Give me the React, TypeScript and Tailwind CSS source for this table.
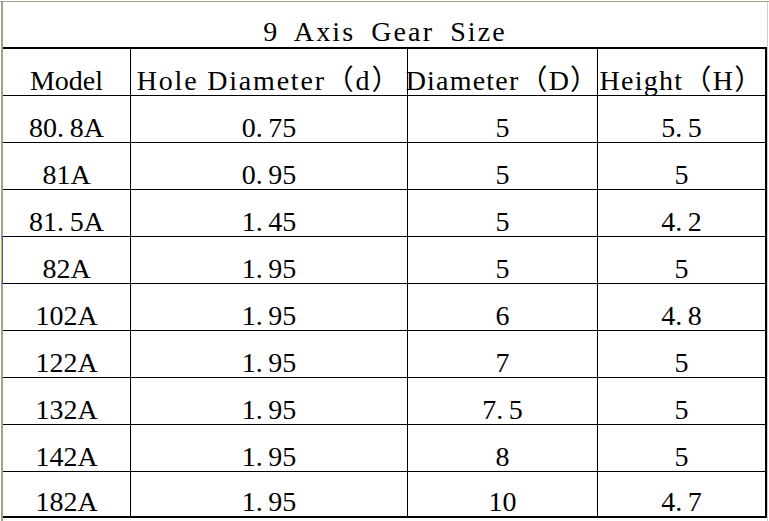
import { Fragment } from "react";

const rows: string[][] = [
  ["80.8A", "0.75", "5", "5.5"],
  ["81A", "0.95", "5", "5"],
  ["81.5A", "1.45", "5", "4.2"],
  ["82A", "1.95", "5", "5"],
  ["102A", "1.95", "6", "4.8"],
  ["122A", "1.95", "7", "5"],
  ["132A", "1.95", "7.5", "5"],
  ["142A", "1.95", "8", "5"],
  ["182A", "1.95", "10", "4.7"],
];

// periods get a half-em cell, like the sheet's monospaced font
const Num = ({ value }: { value: string }) => {
  const parts = value.split(".");
  return (
    <span>
      {parts.map((p, i) => (
        <Fragment key={i}>
          {i > 0 && <span className="inline-block w-[0.45em]">.</span>}
          {p}
        </Fragment>
      ))}
    </span>
  );
};

const cell =
  "flex items-end justify-center whitespace-nowrap border-b border-black";

const App = () => {
  return (
    <div className="w-[769px] h-[521px] bg-white overflow-hidden flex flex-col text-black [font-family:'Liberation_Serif','Noto_Sans_CJK_SC',serif] text-[28px] leading-none">
      <div className="h-px mt-px bg-[#a3a08c] shrink-0" />
      <div className="flex flex-1">
        {/* sheet gutter */}
        <div className="ml-px w-[2px] flex flex-col">
          <div className="h-[234px] bg-[#a3a08c]" />
          <div className="h-[48px] flex border-y border-[#3b5bc4]">
            <div className="w-px bg-[#f2a33a]" />
            <div className="w-px bg-[#3b5bc4]" />
          </div>
          <div className="flex-1 bg-[#a3a08c]" />
        </div>

        <div className="w-[764px] flex flex-col">
          <div className="h-[45px] flex items-end justify-center tracking-[2.1px] [word-spacing:7px] pb-px">
            9 Axis Gear Size
          </div>

          <div className="border-t-2 border-black">
            <div className="grid grid-cols-[128px_277px_190px_169px] h-[47px]">
              <div className={`${cell} border-r`}>Model</div>
              <div className={`${cell} border-r tracking-[1.8px]`}>
                Hole Diameter（d）
              </div>
              <div className={`${cell} border-r tracking-[1.2px]`}>
                Diameter（D）
              </div>
              <div className={`${cell} border-r-2 tracking-[1.3px]`}>
                Height（H）
              </div>
            </div>

            {rows.map((row, i) => {
              const last = i === rows.length - 1;
              return (
                <div
                  key={row[0]}
                  className={`grid grid-cols-[128px_277px_190px_169px] ${
                    last ? "h-[46px] [&>div]:border-b-2" : "h-[47px]"
                  }`}
                >
                  <div className={`${cell} border-r`}>
                    <Num value={row[0]} />
                  </div>
                  <div className={`${cell} border-r`}>
                    <Num value={row[1]} />
                  </div>
                  <div className={`${cell} border-r`}>
                    <Num value={row[2]} />
                  </div>
                  <div className={`${cell} border-r-2`}>
                    <Num value={row[3]} />
                  </div>
                </div>
              );
            })}
          </div>
        </div>

        <div className="w-px bg-[#cfcfcf]" />
      </div>
    </div>
  );
};

export default App;
